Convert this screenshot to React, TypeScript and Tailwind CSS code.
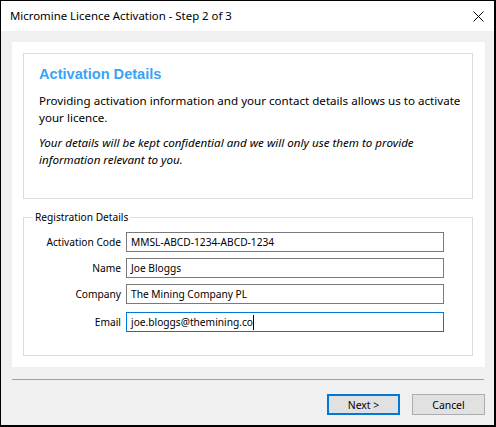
const fields = [
  { label: "Activation Code", value: "MMSL-ABCD-1234-ABCD-1234", focused: false },
  { label: "Name", value: "Joe Bloggs", focused: false },
  { label: "Company", value: "The Mining Company PL", focused: false },
  { label: "Email", value: "joe.bloggs@themining.co", focused: true },
];

const CloseIcon = () => (
  <svg width="11" height="11" viewBox="0 0 11 11" className="block">
    <path d="M0.5 0.5 L10.5 10.5 M10.5 0.5 L0.5 10.5" stroke="#000" strokeWidth="1" />
  </svg>
);

const App = () => {
  return (
    <div className="w-[496px] h-[427px] border-l border-t border-r-2 border-b-2 border-black bg-[#f0f0f0] font-['Noto_Sans',sans-serif] text-black">
      {/* title bar */}
      <div className="h-[30px] bg-white flex items-center justify-between pl-[9px] pr-[10px]">
        <span className="text-[11.4px] leading-[16px]">Micromine Licence Activation - Step 2 of 3</span>
        <CloseIcon />
      </div>

      <div className="pt-[11px] pl-[11px]">
        <div className="w-[473px] h-[325px] bg-white pl-[11px] pt-[11px]">
          <div className="w-[450px] h-[146px] border border-[#dcdcdc] pl-[15px] pt-[10px] text-[11.6px]">
            <h1 className="font-['Liberation_Sans',sans-serif] text-[14.6px] leading-[20px] font-bold text-[#3aa3f6]">
              Activation Details
            </h1>
            <p className="mt-[8px] leading-[17px] whitespace-nowrap">
              Providing activation information and your contact details allows us to activate
              <br />
              your licence.
            </p>
            <p className="mt-[8px] leading-[17px] italic whitespace-nowrap">
              Your details will be kept confidential and we will only use them to provide
              <br />
              information relevant to you.
            </p>
          </div>

          <fieldset className="mt-[10px] w-[450px] border border-[#dcdcdc] pt-[7px] pb-[23px] text-[10.2px]">
            <legend className="ml-[9px] px-[2px] leading-[16px]">Registration Details</legend>
            {fields.map((f, i) => (
              <div
                key={f.label}
                className={`flex items-center ${i === 0 ? "" : f.focused ? "mt-[8px]" : "mt-[6px]"}`}
              >
                <span className="w-[97px] text-right leading-[16px]">{f.label}</span>
                <div
                  className={`ml-[5px] w-[318px] h-[20px] border flex items-center pl-[4px] leading-[16px] ${
                    f.focused ? "border-[#0078d7]" : "border-[#7a7a7a]"
                  }`}
                >
                  {f.value}
                  {f.focused && <span className="w-px h-[15px] bg-black" />}
                </div>
              </div>
            ))}
          </fieldset>
        </div>

        <div className="mt-[12px] w-[472px] h-px bg-[#a0a0a0]" />

        <div className="mt-[14px] w-[473px] flex justify-end gap-[12px] text-[10.4px]">
          <button className="w-[73px] h-[21px] border-2 border-[#0078d7] bg-[#e1e1e1] flex items-center justify-center leading-[16px]">
            Next &gt;
          </button>
          <button className="w-[73px] h-[21px] border border-[#adadad] bg-[#e1e1e1] flex items-center justify-center leading-[16px]">
            Cancel
          </button>
        </div>
      </div>
    </div>
  );
};

export default App;
